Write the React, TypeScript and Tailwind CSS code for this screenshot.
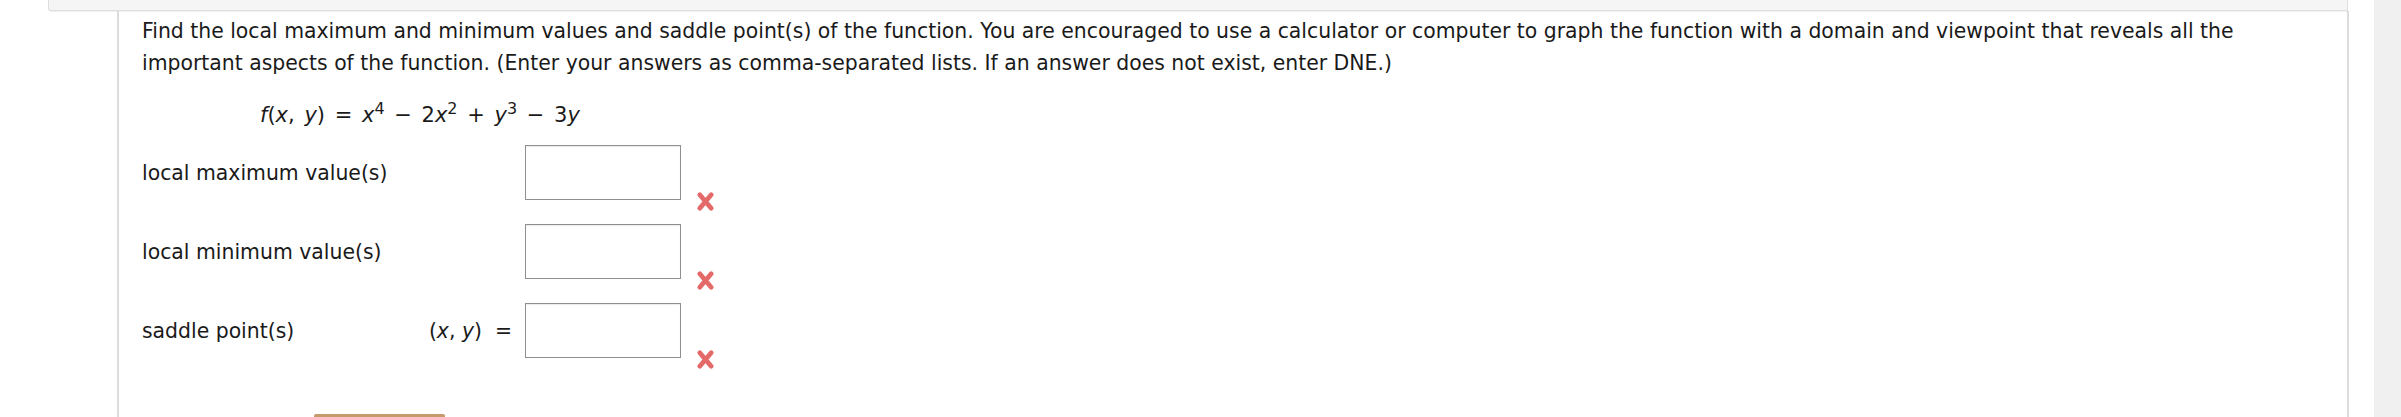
import React from "react";

function XMark() {
  return (
    <svg width="19" height="21" viewBox="0 0 19 21" className="block">
      <path d="M3.8 3.8 L15.2 17.2 M15.2 3.8 L3.8 17.2" stroke="#e46a6a" strokeWidth="4.8" strokeLinecap="round" fill="none" />
    </svg>
  );
}

function AnswerBox() {
  return (
    <div className="w-[156px] h-[55px] border border-[#8f8f8f] bg-white shadow-[inset_0_1px_1px_rgba(0,0,0,0.08)]" />
  );
}

function Row({ label, prefix }: { label: string; prefix?: React.ReactNode }) {
  return (
    <div className="flex items-center">
      <div className="w-[383px] flex items-center justify-between pr-[13px]">
        <span>{label}</span>
        {prefix ? <span>{prefix}</span> : null}
      </div>
      <AnswerBox />
      <div className="self-end ml-[15px] mb-[-12px]">
        <XMark />
      </div>
    </div>
  );
}

export default function App() {
  return (
    <div className="h-[417px] w-[2401px] overflow-hidden bg-white flex font-['DejaVu_Sans',Verdana,sans-serif] text-[20.4px] leading-[32px] text-[#1a1a1a]">
      <div className="w-[2374px] flex flex-col">
        <div className="ml-[48px] w-[2300px] h-[11px] shrink-0 bg-[#f5f5f5] border-b border-l border-r border-[#dedede] rounded-bl-[3px] shadow-[0_1px_1px_rgba(0,0,0,0.06)]" />
        <div className="ml-[117px] w-[2232px] flex-1 border-l-2 border-r-2 border-[#dcdcdc] pl-[23px] pt-[4px]">
          <p className="whitespace-nowrap">
            Find the local maximum and minimum values and saddle point(s) of the function. You are encouraged to use a calculator or computer to graph the function with a domain and viewpoint that reveals all the
            <br />
            important aspects of the function. (Enter your answers as comma-separated lists. If an answer does not exist, enter DNE.)
          </p>
          <div className="mt-[20px] ml-[118px] whitespace-nowrap text-[21px] [word-spacing:3px]">
            <i>f</i>(<i>x</i>, <i>y</i>) = <i>x</i>
            <sup className="text-[16px]">4</sup> − 2<i>x</i>
            <sup className="text-[16px]">2</sup> + <i>y</i>
            <sup className="text-[16px]">3</sup> − 3<i>y</i>
          </div>
          <div className="mt-[14px] flex flex-col gap-[24px]">
            <Row label="local maximum value(s)" />
            <Row label="local minimum value(s)" />
            <Row
              label="saddle point(s)"
              prefix={
                <>
                  (<i>x</i>, <i>y</i>)&nbsp; =
                </>
              }
            />
          </div>
          <div className="mt-[56px] ml-[172px] w-[131px] h-[20px] border-t-[3px] border-[#c59b6b] rounded-t-[2px]" />
        </div>
      </div>
      <div className="w-[27px] bg-[#f0f0f0]" />
    </div>
  );
}
